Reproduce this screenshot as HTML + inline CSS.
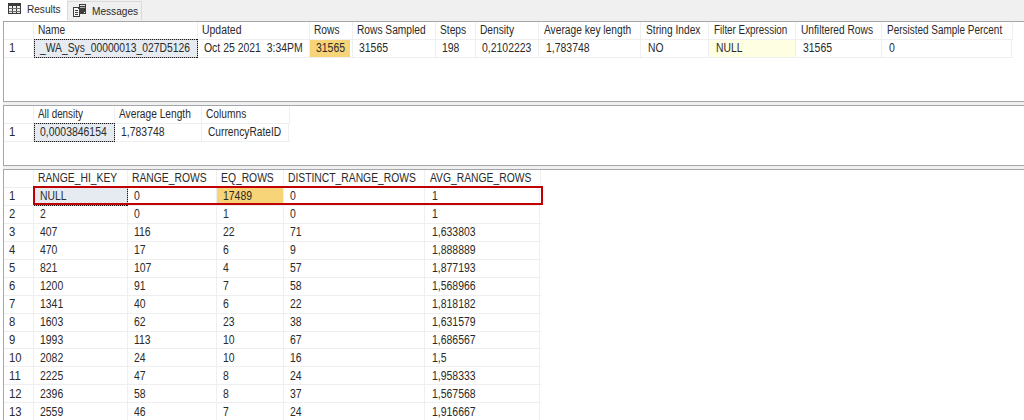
<!DOCTYPE html>
<html><head><meta charset="utf-8"><style>
html,body{margin:0;padding:0;}
body{width:1024px;height:420px;overflow:hidden;position:relative;background:#fff;font-family:"Liberation Sans", sans-serif;font-size:12px;color:#2a2a2a;}
body>div{position:absolute;}
.t{position:absolute;white-space:pre;line-height:17px;height:17px;transform-origin:0 0;display:block;}
</style></head><body>
<div style="left:0px;top:0px;width:1024px;height:21px;background:#f0f0f0;"></div>
<div style="left:0px;top:0px;width:67px;height:21px;background:#ffffff;"></div>
<div style="left:3px;top:102px;width:1021px;height:3px;background:#f0f0f0;"></div>
<div style="left:3px;top:166px;width:1021px;height:3px;background:#f0f0f0;"></div>
<div style="left:67px;top:1px;width:75px;height:19px;background:#f0f0f0;box-sizing:border-box;border:1px solid #dadada;border-bottom:none;"></div>
<!--grid1-->
<div style="left:3px;top:21px;width:1021px;height:1px;background:#a4a6ab;"></div>
<div style="left:3px;top:21px;width:1px;height:81px;background:#a4a6ab;"></div>
<div style="left:3px;top:101px;width:1021px;height:1px;background:#a4a6ab;"></div>
<div style="left:34px;top:40px;width:163px;height:17px;background:#e6ebf1;"></div>
<div style="left:309px;top:40px;width:41px;height:17px;background:#f7d478;"></div>
<div style="left:709px;top:40px;width:86px;height:17px;background:#fefee2;"></div>
<div style="left:4px;top:39px;width:1009px;height:1px;background:#efefef;"></div>
<div style="left:4px;top:57px;width:1009px;height:1px;background:#efefef;"></div>
<div style="left:33px;top:22px;width:1px;height:36px;background:#efefef;"></div>
<div style="left:197px;top:22px;width:1px;height:36px;background:#efefef;"></div>
<div style="left:309px;top:22px;width:1px;height:36px;background:#efefef;"></div>
<div style="left:352px;top:22px;width:1px;height:36px;background:#efefef;"></div>
<div style="left:435px;top:22px;width:1px;height:36px;background:#efefef;"></div>
<div style="left:475px;top:22px;width:1px;height:36px;background:#efefef;"></div>
<div style="left:538px;top:22px;width:1px;height:36px;background:#efefef;"></div>
<div style="left:640px;top:22px;width:1px;height:36px;background:#efefef;"></div>
<div style="left:708px;top:22px;width:1px;height:36px;background:#efefef;"></div>
<div style="left:795px;top:22px;width:1px;height:36px;background:#efefef;"></div>
<div style="left:881px;top:22px;width:1px;height:36px;background:#efefef;"></div>
<div style="left:1012px;top:22px;width:1px;height:18px;background:#efefef;"></div>
<div style="left:1011px;top:40px;width:1px;height:18px;background:#efefef;"></div>
<span class="t" style="left:38px;top:22px;transform:scaleX(0.85);">Name</span>
<span class="t" style="left:202px;top:22px;transform:scaleX(0.87);">Updated</span>
<span class="t" style="left:314px;top:22px;transform:scaleX(0.85);">Rows</span>
<span class="t" style="left:357px;top:22px;transform:scaleX(0.85);">Rows Sampled</span>
<span class="t" style="left:440px;top:22px;transform:scaleX(0.85);">Steps</span>
<span class="t" style="left:480px;top:22px;transform:scaleX(0.85);">Density</span>
<span class="t" style="left:544px;top:22px;transform:scaleX(0.85);">Average key length</span>
<span class="t" style="left:646px;top:22px;transform:scaleX(0.85);">String Index</span>
<span class="t" style="left:714px;top:22px;transform:scaleX(0.82);">Filter Expression</span>
<span class="t" style="left:801px;top:22px;transform:scaleX(0.85);">Unfiltered Rows</span>
<span class="t" style="left:887px;top:22px;transform:scaleX(0.83);">Persisted Sample Percent</span>
<span class="t" style="left:9px;top:40px;transform:scaleX(0.94);">1</span>
<span class="t" style="left:40px;top:40px;transform:scaleX(0.86);">_WA_Sys_00000013_027D5126</span>
<span class="t" style="left:204px;top:40px;transform:scaleX(0.87);">Oct 25 2021  3:34PM</span>
<span class="t" style="left:316px;top:40px;transform:scaleX(0.87);">31565</span>
<span class="t" style="left:359px;top:40px;transform:scaleX(0.87);">31565</span>
<span class="t" style="left:442px;top:40px;transform:scaleX(0.87);">198</span>
<span class="t" style="left:482px;top:40px;transform:scaleX(0.87);">0,2102223</span>
<span class="t" style="left:546px;top:40px;transform:scaleX(0.87);">1,783748</span>
<span class="t" style="left:648px;top:40px;transform:scaleX(0.86);">NO</span>
<span class="t" style="left:716px;top:40px;transform:scaleX(0.86);">NULL</span>
<span class="t" style="left:803px;top:40px;transform:scaleX(0.87);">31565</span>
<span class="t" style="left:889px;top:40px;transform:scaleX(0.87);">0</span>
<div style="left:3px;top:105px;width:1021px;height:1px;background:#a4a6ab;"></div>
<div style="left:3px;top:105px;width:1px;height:61px;background:#a4a6ab;"></div>
<div style="left:3px;top:165px;width:1021px;height:1px;background:#a4a6ab;"></div>
<div style="left:34px;top:124px;width:80px;height:17px;background:#e6ebf1;"></div>
<div style="left:4px;top:123px;width:286px;height:1px;background:#efefef;"></div>
<div style="left:4px;top:141px;width:286px;height:1px;background:#efefef;"></div>
<div style="left:33px;top:106px;width:1px;height:36px;background:#efefef;"></div>
<div style="left:114px;top:106px;width:1px;height:36px;background:#efefef;"></div>
<div style="left:201px;top:106px;width:1px;height:36px;background:#efefef;"></div>
<div style="left:289px;top:106px;width:1px;height:18px;background:#efefef;"></div>
<div style="left:288px;top:124px;width:1px;height:18px;background:#efefef;"></div>
<span class="t" style="left:38px;top:106px;transform:scaleX(0.82);">All density</span>
<span class="t" style="left:119px;top:106px;transform:scaleX(0.85);">Average Length</span>
<span class="t" style="left:206px;top:106px;transform:scaleX(0.85);">Columns</span>
<span class="t" style="left:9px;top:124px;transform:scaleX(0.94);">1</span>
<span class="t" style="left:40px;top:124px;transform:scaleX(0.87);">0,0003846154</span>
<span class="t" style="left:121px;top:124px;transform:scaleX(0.87);">1,783748</span>
<span class="t" style="left:208px;top:124px;transform:scaleX(0.85);">CurrencyRateID</span>
<div style="left:3px;top:169px;width:1021px;height:1px;background:#a4a6ab;"></div>
<div style="left:3px;top:169px;width:1px;height:251px;background:#a4a6ab;"></div>
<div style="left:34px;top:188px;width:93px;height:17px;background:#e6ebf1;"></div>
<div style="left:217px;top:188px;width:66px;height:17px;background:#f7d478;"></div>
<div style="left:4px;top:187px;width:537px;height:1px;background:#efefef;"></div>
<div style="left:4px;top:205px;width:537px;height:1px;background:#efefef;"></div>
<div style="left:4px;top:223px;width:537px;height:1px;background:#efefef;"></div>
<div style="left:4px;top:241px;width:537px;height:1px;background:#efefef;"></div>
<div style="left:4px;top:259px;width:537px;height:1px;background:#efefef;"></div>
<div style="left:4px;top:277px;width:537px;height:1px;background:#efefef;"></div>
<div style="left:4px;top:295px;width:537px;height:1px;background:#efefef;"></div>
<div style="left:4px;top:313px;width:537px;height:1px;background:#efefef;"></div>
<div style="left:4px;top:331px;width:537px;height:1px;background:#efefef;"></div>
<div style="left:4px;top:348px;width:537px;height:1px;background:#efefef;"></div>
<div style="left:4px;top:366px;width:537px;height:1px;background:#efefef;"></div>
<div style="left:4px;top:384px;width:537px;height:1px;background:#efefef;"></div>
<div style="left:4px;top:402px;width:537px;height:1px;background:#efefef;"></div>
<div style="left:33px;top:170px;width:1px;height:250px;background:#efefef;"></div>
<div style="left:127px;top:170px;width:1px;height:250px;background:#efefef;"></div>
<div style="left:216px;top:170px;width:1px;height:250px;background:#efefef;"></div>
<div style="left:283px;top:170px;width:1px;height:250px;background:#efefef;"></div>
<div style="left:424px;top:170px;width:1px;height:250px;background:#efefef;"></div>
<div style="left:540px;top:170px;width:1px;height:18px;background:#efefef;"></div>
<div style="left:539px;top:188px;width:1px;height:232px;background:#efefef;"></div>
<span class="t" style="left:38px;top:170px;transform:scaleX(0.86);">RANGE_HI_KEY</span>
<span class="t" style="left:132px;top:170px;transform:scaleX(0.86);">RANGE_ROWS</span>
<span class="t" style="left:221px;top:170px;transform:scaleX(0.86);">EQ_ROWS</span>
<span class="t" style="left:288px;top:170px;transform:scaleX(0.86);">DISTINCT_RANGE_ROWS</span>
<span class="t" style="left:430px;top:170px;transform:scaleX(0.86);">AVG_RANGE_ROWS</span>
<span class="t" style="left:9px;top:188px;transform:scaleX(0.94);">1</span>
<span class="t" style="left:40px;top:188px;transform:scaleX(0.86);">NULL</span>
<span class="t" style="left:134px;top:188px;transform:scaleX(0.87);">0</span>
<span class="t" style="left:223px;top:188px;transform:scaleX(0.87);">17489</span>
<span class="t" style="left:290px;top:188px;transform:scaleX(0.87);">0</span>
<span class="t" style="left:432px;top:188px;transform:scaleX(0.87);">1</span>
<span class="t" style="left:9px;top:206px;transform:scaleX(0.94);">2</span>
<span class="t" style="left:40px;top:206px;transform:scaleX(0.87);">2</span>
<span class="t" style="left:134px;top:206px;transform:scaleX(0.87);">0</span>
<span class="t" style="left:223px;top:206px;transform:scaleX(0.87);">1</span>
<span class="t" style="left:290px;top:206px;transform:scaleX(0.87);">0</span>
<span class="t" style="left:432px;top:206px;transform:scaleX(0.87);">1</span>
<span class="t" style="left:9px;top:224px;transform:scaleX(0.94);">3</span>
<span class="t" style="left:40px;top:224px;transform:scaleX(0.87);">407</span>
<span class="t" style="left:134px;top:224px;transform:scaleX(0.87);">116</span>
<span class="t" style="left:223px;top:224px;transform:scaleX(0.87);">22</span>
<span class="t" style="left:290px;top:224px;transform:scaleX(0.87);">71</span>
<span class="t" style="left:432px;top:224px;transform:scaleX(0.87);">1,633803</span>
<span class="t" style="left:9px;top:242px;transform:scaleX(0.94);">4</span>
<span class="t" style="left:40px;top:242px;transform:scaleX(0.87);">470</span>
<span class="t" style="left:134px;top:242px;transform:scaleX(0.87);">17</span>
<span class="t" style="left:223px;top:242px;transform:scaleX(0.87);">6</span>
<span class="t" style="left:290px;top:242px;transform:scaleX(0.87);">9</span>
<span class="t" style="left:432px;top:242px;transform:scaleX(0.87);">1,888889</span>
<span class="t" style="left:9px;top:260px;transform:scaleX(0.94);">5</span>
<span class="t" style="left:40px;top:260px;transform:scaleX(0.87);">821</span>
<span class="t" style="left:134px;top:260px;transform:scaleX(0.87);">107</span>
<span class="t" style="left:223px;top:260px;transform:scaleX(0.87);">4</span>
<span class="t" style="left:290px;top:260px;transform:scaleX(0.87);">57</span>
<span class="t" style="left:432px;top:260px;transform:scaleX(0.87);">1,877193</span>
<span class="t" style="left:9px;top:278px;transform:scaleX(0.94);">6</span>
<span class="t" style="left:40px;top:278px;transform:scaleX(0.87);">1200</span>
<span class="t" style="left:134px;top:278px;transform:scaleX(0.87);">91</span>
<span class="t" style="left:223px;top:278px;transform:scaleX(0.87);">7</span>
<span class="t" style="left:290px;top:278px;transform:scaleX(0.87);">58</span>
<span class="t" style="left:432px;top:278px;transform:scaleX(0.87);">1,568966</span>
<span class="t" style="left:9px;top:296px;transform:scaleX(0.94);">7</span>
<span class="t" style="left:40px;top:296px;transform:scaleX(0.87);">1341</span>
<span class="t" style="left:134px;top:296px;transform:scaleX(0.87);">40</span>
<span class="t" style="left:223px;top:296px;transform:scaleX(0.87);">6</span>
<span class="t" style="left:290px;top:296px;transform:scaleX(0.87);">22</span>
<span class="t" style="left:432px;top:296px;transform:scaleX(0.87);">1,818182</span>
<span class="t" style="left:9px;top:314px;transform:scaleX(0.94);">8</span>
<span class="t" style="left:40px;top:314px;transform:scaleX(0.87);">1603</span>
<span class="t" style="left:134px;top:314px;transform:scaleX(0.87);">62</span>
<span class="t" style="left:223px;top:314px;transform:scaleX(0.87);">23</span>
<span class="t" style="left:290px;top:314px;transform:scaleX(0.87);">38</span>
<span class="t" style="left:432px;top:314px;transform:scaleX(0.87);">1,631579</span>
<span class="t" style="left:9px;top:332px;transform:scaleX(0.94);">9</span>
<span class="t" style="left:40px;top:332px;transform:scaleX(0.87);">1993</span>
<span class="t" style="left:134px;top:332px;transform:scaleX(0.87);">113</span>
<span class="t" style="left:223px;top:332px;transform:scaleX(0.87);">10</span>
<span class="t" style="left:290px;top:332px;transform:scaleX(0.87);">67</span>
<span class="t" style="left:432px;top:332px;transform:scaleX(0.87);">1,686567</span>
<span class="t" style="left:9px;top:350px;transform:scaleX(0.94);">10</span>
<span class="t" style="left:40px;top:350px;transform:scaleX(0.87);">2082</span>
<span class="t" style="left:134px;top:350px;transform:scaleX(0.87);">24</span>
<span class="t" style="left:223px;top:350px;transform:scaleX(0.87);">10</span>
<span class="t" style="left:290px;top:350px;transform:scaleX(0.87);">16</span>
<span class="t" style="left:432px;top:350px;transform:scaleX(0.87);">1,5</span>
<span class="t" style="left:9px;top:368px;transform:scaleX(0.94);">11</span>
<span class="t" style="left:40px;top:368px;transform:scaleX(0.87);">2225</span>
<span class="t" style="left:134px;top:368px;transform:scaleX(0.87);">47</span>
<span class="t" style="left:223px;top:368px;transform:scaleX(0.87);">8</span>
<span class="t" style="left:290px;top:368px;transform:scaleX(0.87);">24</span>
<span class="t" style="left:432px;top:368px;transform:scaleX(0.87);">1,958333</span>
<span class="t" style="left:9px;top:386px;transform:scaleX(0.94);">12</span>
<span class="t" style="left:40px;top:386px;transform:scaleX(0.87);">2396</span>
<span class="t" style="left:134px;top:386px;transform:scaleX(0.87);">58</span>
<span class="t" style="left:223px;top:386px;transform:scaleX(0.87);">8</span>
<span class="t" style="left:290px;top:386px;transform:scaleX(0.87);">37</span>
<span class="t" style="left:432px;top:386px;transform:scaleX(0.87);">1,567568</span>
<span class="t" style="left:9px;top:404px;transform:scaleX(0.94);">13</span>
<span class="t" style="left:40px;top:404px;transform:scaleX(0.87);">2559</span>
<span class="t" style="left:134px;top:404px;transform:scaleX(0.87);">46</span>
<span class="t" style="left:223px;top:404px;transform:scaleX(0.87);">7</span>
<span class="t" style="left:290px;top:404px;transform:scaleX(0.87);">24</span>
<span class="t" style="left:432px;top:404px;transform:scaleX(0.87);">1,916667</span>
<svg style="position:absolute;left:34px;top:39px" width="164" height="19" shape-rendering="crispEdges"><path d="M0 0.5H164M0 18.5H164M0.5 0V19M163.5 0V19" stroke="#b4b6ba" stroke-width="1" fill="none"/><path d="M0 0.5H164M0 18.5H164M0.5 0V19M163.5 0V19" stroke="#1a1a1a" stroke-width="1" stroke-dasharray="1 1" fill="none"/></svg>
<svg style="position:absolute;left:34px;top:123px" width="81" height="19" shape-rendering="crispEdges"><path d="M0 0.5H81M0 18.5H81M0.5 0V19M80.5 0V19" stroke="#b4b6ba" stroke-width="1" fill="none"/><path d="M0 0.5H81M0 18.5H81M0.5 0V19M80.5 0V19" stroke="#1a1a1a" stroke-width="1" stroke-dasharray="1 1" fill="none"/></svg>
<svg style="position:absolute;left:34px;top:187px" width="94" height="19" shape-rendering="crispEdges"><path d="M0 0.5H94M0 18.5H94M0.5 0V19M93.5 0V19" stroke="#b4b6ba" stroke-width="1" fill="none"/><path d="M0 0.5H94M0 18.5H94M0.5 0V19M93.5 0V19" stroke="#1a1a1a" stroke-width="1" stroke-dasharray="1 1" fill="none"/></svg>
<div style="left:33px;top:186px;width:510px;height:19px;box-sizing:border-box;border:2px solid #c00000;background:transparent"></div>
<span class="t" style="left:27px;top:1px;transform:scaleX(0.875);font-size:11.5px;">Results</span>
<span class="t" style="left:92px;top:3px;transform:scaleX(0.88);font-size:11.5px;">Messages</span>
<svg style="position:absolute;left:8px;top:3px" width="13" height="11" shape-rendering="crispEdges">
<rect x="0" y="0" width="13" height="11" fill="#3a3a3a"/>
<rect x="1" y="5" width="11" height="1" fill="#6e6e6e"/><rect x="1" y="8" width="11" height="1" fill="#6e6e6e"/>
<rect x="1" y="3" width="3" height="2" fill="#eeeeee"/><rect x="5" y="3" width="3" height="2" fill="#eeeeee"/><rect x="9" y="3" width="3" height="2" fill="#eeeeee"/>
<rect x="1" y="6" width="3" height="2" fill="#eeeeee"/><rect x="5" y="6" width="3" height="2" fill="#eeeeee"/><rect x="9" y="6" width="3" height="2" fill="#eeeeee"/>
<rect x="1" y="9" width="3" height="1" fill="#eeeeee"/><rect x="5" y="9" width="3" height="1" fill="#eeeeee"/><rect x="9" y="9" width="3" height="1" fill="#eeeeee"/>
</svg>
<svg style="position:absolute;left:73px;top:3px" width="14" height="14" shape-rendering="crispEdges">
<rect x="6" y="1" width="7" height="10" fill="#3c3c3c"/>
<rect x="7" y="2" width="5" height="1" fill="#e8e8e8"/><rect x="7" y="4" width="5" height="1" fill="#b0b0b0"/>
<rect x="11" y="9" width="1" height="1" fill="#f0f0f0"/>
<path d="M0 4H5L7 6V14H0Z" fill="#3c3c3c"/>
<path d="M1 5H4.5L6 6.5V13H1Z" fill="#fafafa"/>
<rect x="2" y="7" width="3" height="1" fill="#3c3c3c"/><rect x="2" y="9" width="3" height="1" fill="#3c3c3c"/><rect x="2" y="11" width="3" height="1" fill="#3c3c3c"/>
</svg>
</body></html>
